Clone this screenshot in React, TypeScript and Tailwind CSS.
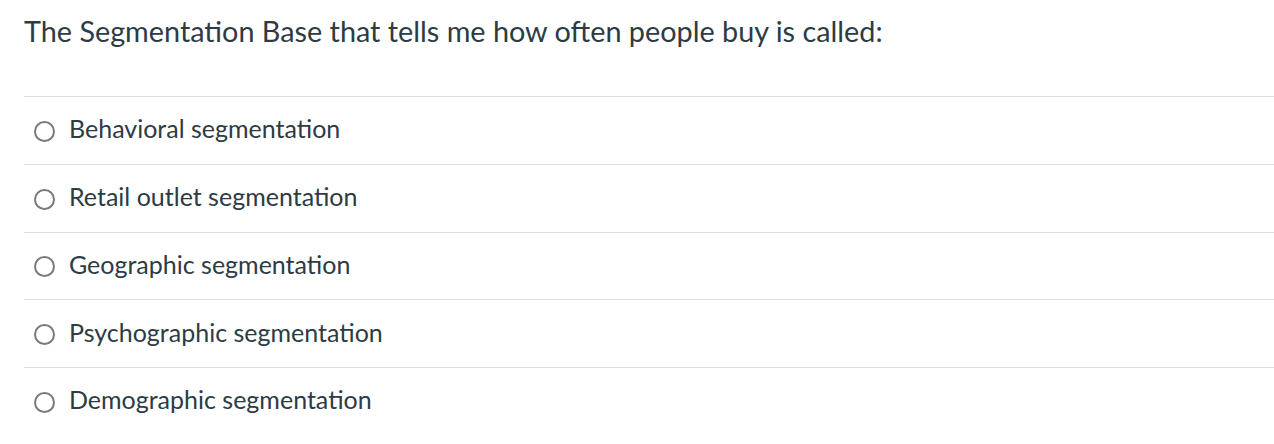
import React from 'react';

const options = [
  'Behavioral segmentation',
  'Retail outlet segmentation',
  'Geographic segmentation',
  'Psychographic segmentation',
  'Demographic segmentation',
];

export default function App() {
  return (
    <div
      className="w-[1274px] h-[444px] bg-white overflow-hidden text-[#2d3b45]"
      style={{ fontFamily: 'Lato, "Open Sans", sans-serif' }}
    >
      <div className="pl-6 pt-[13px] h-[96px]">
        <p className="text-[28.8px] leading-[36px]">
          The Segmentation Base that tells me how often people buy is called:
        </p>
      </div>
      <div className="ml-6">
        {options.map((opt) => (
          <label
            key={opt}
            className="flex items-center h-[67.75px] border-t border-[#dddddd] pl-[10px] gap-[14px]"
          >
            <span className="w-[21px] h-[21px] mt-[2px] rounded-full border-2 border-[#7a7a7a] shrink-0" />
            <span className="text-[25px] leading-[32px] -mt-[4px]">{opt}</span>
          </label>
        ))}
      </div>
    </div>
  );
}
